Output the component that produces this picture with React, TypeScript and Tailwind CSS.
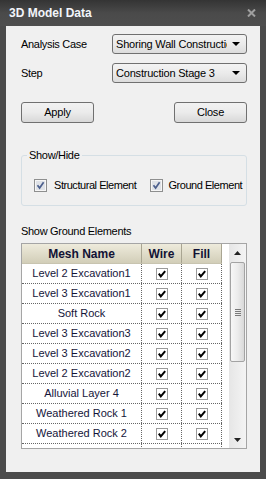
import React from "react";

const rows = [
  "Level 2 Excavation1",
  "Level 3 Excavation1",
  "Soft Rock",
  "Level 3 Excavation3",
  "Level 3 Excavation2",
  "Level 2 Excavation2",
  "Alluvial Layer 4",
  "Weathered Rock 1",
  "Weathered Rock 2",
  "",
];

function DropArrow() {
  return (
    <svg width="8" height="4" viewBox="0 0 8 4">
      <path d="M0 0 H8 L4 4 Z" fill="#000" />
    </svg>
  );
}

function Dropdown({ text }: { text: string }) {
  return (
    <div className="w-[135px] h-[20px] flex items-center rounded-[3px] border border-[#707070] bg-gradient-to-b from-[#f3f3f3] via-[#ebebeb] to-[#dcdcdc]">
      <div className="flex-1 overflow-hidden whitespace-nowrap pl-[3px] text-[11px] tracking-[-0.2px] leading-[13px]">
        {text}
      </div>
      <div className="w-[19px] shrink-0 flex items-center justify-center pr-[1px]">
        <DropArrow />
      </div>
    </div>
  );
}

function Button({ label }: { label: string }) {
  return (
    <div className="w-[73px] h-[21px] flex items-center justify-center rounded-[3px] border border-[#707070] bg-gradient-to-b from-[#f2f2f2] via-[#ebebeb] to-[#d8d8d8] text-[11px] tracking-[-0.2px]">
      {label}
    </div>
  );
}

function GroupCheck() {
  return (
    <svg width="13" height="13" viewBox="0 0 13 13" className="shrink-0">
      <rect x="0.5" y="0.5" width="12" height="12" fill="#f6f6f6" stroke="#8e8f8f" />
      <rect x="2" y="2" width="9" height="9" fill="#dfe2e7" />
      <path d="M3.5 6.3 L5.6 9 L9.6 3.3" stroke="#4b5f8d" strokeWidth="1.7" fill="none" />
    </svg>
  );
}

function GridCheck() {
  return (
    <svg width="12" height="12" viewBox="0 0 12 12">
      <rect x="0.5" y="0.5" width="11" height="11" fill="#fff" stroke="#9a9a9a" />
      <path d="M2.8 5.6 L4.8 8.3 L9.2 3.2" stroke="#000" strokeWidth="2" fill="none" />
    </svg>
  );
}

export default function App() {
  return (
    <div className="w-[266px] h-[479px] bg-[#4b4b4b] flex flex-col overflow-hidden font-['Liberation_Sans',Arial,sans-serif] text-black">
      <div className="h-[26px] shrink-0 flex items-center justify-between pl-[9px] pr-[10px] bg-gradient-to-b from-[#343434] via-[#4a4a4a] to-[#4e4e4e]">
        <span className="text-[12px] font-bold text-[#f2f5fa] leading-[14px]">3D Model Data</span>
        <svg width="9" height="8" viewBox="0 0 9 8">
          <path d="M1 0.5 L8 7.5 M8 0.5 L1 7.5" stroke="#a0a0a0" strokeWidth="2" />
        </svg>
      </div>

      <div className="flex-1 mx-[6px] mb-[7px] bg-[#f0f0f0] flex flex-col pl-[15px] pr-[13px] text-[11px] tracking-[-0.3px]">
        <div className="mt-[8px] flex items-center justify-between">
          <span className="leading-[13px]">Analysis Case</span>
          <Dropdown text="Shoring Wall Construction" />
        </div>
        <div className="mt-[9px] flex items-center justify-between">
          <span className="leading-[13px]">Step</span>
          <Dropdown text="Construction Stage 3" />
        </div>

        <div className="mt-[19px] flex items-center justify-between">
          <Button label="Apply" />
          <Button label="Close" />
        </div>

        <fieldset className="mt-[25px] h-[58px] min-w-0 w-full border border-[#d5dfe5] rounded-[3px] pl-[5px] pt-[17px]">
          <legend className="px-[2px] leading-[14px]">Show/Hide</legend>
          <div className="flex items-center ml-[7px] whitespace-nowrap tracking-[-0.45px]">
            <GroupCheck />
            <span className="ml-[7px] leading-[13px]">Structural Element</span>
            <div className="ml-[14px] flex items-center">
              <GroupCheck />
              <span className="ml-[5px] leading-[13px]">Ground Element</span>
            </div>
          </div>
        </fieldset>

        <div className="mt-[19px] leading-[13px]">Show Ground Elements</div>

        <div className="mt-[5px] h-[206px] border border-[#a5a5a5] bg-white flex tracking-normal">
          <div className="w-[200px] flex flex-col">
            <div className="h-[20px] shrink-0 flex bg-gradient-to-b from-[#eeebdc] to-[#d2ceb8] border-b border-[#c8c4b0] text-[12px] font-bold text-[#121235]">
              <div className="w-[120px] flex items-center justify-center border-r border-[#a9a592]">Mesh Name</div>
              <div className="w-[40px] flex items-center justify-center border-r border-[#a9a592]">Wire</div>
              <div className="w-[40px] flex items-center justify-center border-r border-[#a9a592]">Fill</div>
            </div>
            <div className="flex-1 overflow-hidden">
              {rows.map((r, i) => (
                <div key={i} className="h-[20px] flex border-b border-dotted border-[#666] text-[11px] text-[#15153a]">
                  <div className="w-[120px] flex items-center justify-center border-r border-dotted border-[#666] whitespace-nowrap">{r}</div>
                  <div className="w-[40px] flex items-center justify-center border-r border-dotted border-[#666]">
                    <GridCheck />
                  </div>
                  <div className="w-[40px] flex items-center justify-center border-r border-dotted border-[#666]">
                    <GridCheck />
                  </div>
                </div>
              ))}
            </div>
          </div>
          <div className="flex-1" />
          <div className="w-[17px] flex flex-col bg-gradient-to-r from-[#e6e6e6] to-[#f4f4f4]">
            <div className="h-[17px] shrink-0 flex items-center justify-center">
              <svg width="7" height="4" viewBox="0 0 7 4">
                <path d="M0 4 H7 L3.5 0 Z" fill="#222" />
              </svg>
            </div>
            <div className="flex-1 flex flex-col">
              <div className="mt-[1px] h-[100px] mx-[1px] rounded-[2px] border border-[#a3a3a3] bg-gradient-to-r from-[#f7f7f7] via-[#ececec] to-[#d9d9d9] flex flex-col items-center justify-center gap-[1px]">
                <div className="w-[6px] h-[1px] bg-[#7a7a7a]" />
                <div className="w-[6px] h-[1px] bg-[#7a7a7a]" />
                <div className="w-[6px] h-[1px] bg-[#7a7a7a]" />
                <div className="w-[6px] h-[1px] bg-[#7a7a7a]" />
              </div>
            </div>
            <div className="h-[17px] shrink-0 flex items-center justify-center">
              <svg width="7" height="4" viewBox="0 0 7 4">
                <path d="M0 0 H7 L3.5 4 Z" fill="#222" />
              </svg>
            </div>
          </div>
        </div>
      </div>
    </div>
  );
}
